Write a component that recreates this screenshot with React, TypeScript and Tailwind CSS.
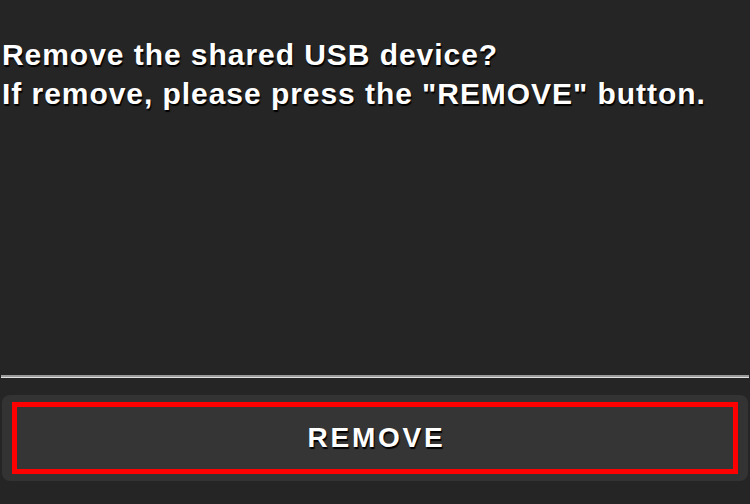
export default function App() {
  return (
    <div className="flex h-[504px] w-[750px] flex-col bg-[#252525] font-['Liberation_Sans',Arial,sans-serif] text-white">
      <div className="flex-1 px-[2px] pt-[35px]">
        <p className="text-[30px] font-bold leading-[39px] tracking-[0.95px] [text-shadow:1px_2px_1px_#000]">
          Remove the shared USB device?
          <br />
          If remove, please press the "REMOVE" button.
        </p>
      </div>
      <div className="mx-px h-[3px] border-t-2 border-b border-t-[#9a9a9a] border-b-[#e0e0e0]" />
      <div className="px-[2px] pt-[17px] pb-[23px]">
        <div className="rounded-lg bg-[#333333] px-[10px] py-[7px]">
          <button
            type="button"
            className="flex h-[72px] w-full items-center justify-center border-[5px] border-[#ff0000] bg-[#353535] pl-[3px] text-[28px] font-bold tracking-[2.8px] text-white [text-shadow:1px_2px_1px_#000]"
          >
            REMOVE
          </button>
        </div>
      </div>
    </div>
  );
}
